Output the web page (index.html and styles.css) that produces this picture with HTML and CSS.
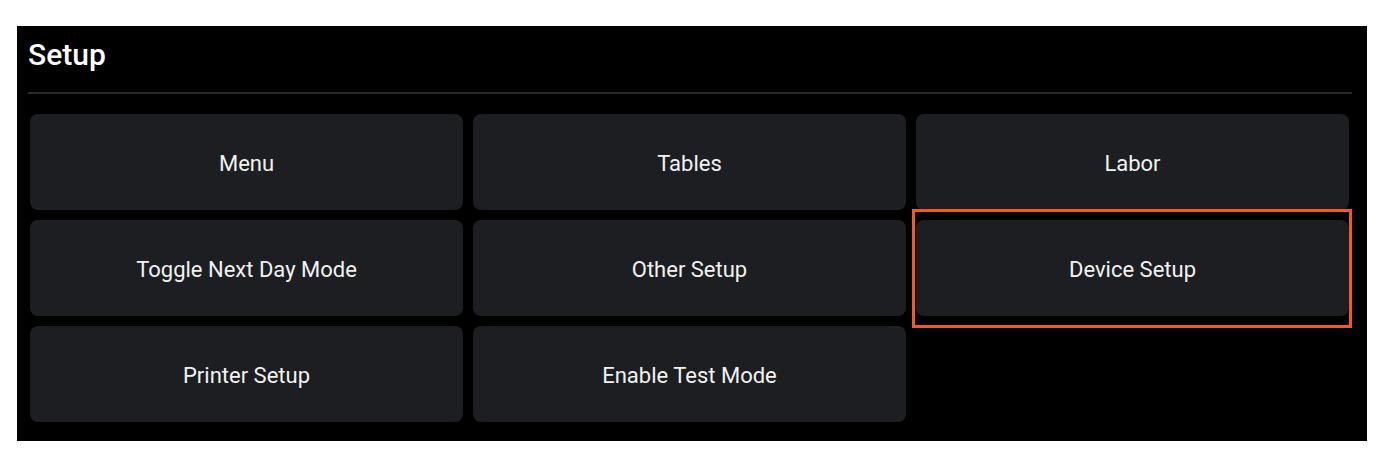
FILE: index.html
```html
<!DOCTYPE html>
<html lang="en">
<head>
<meta charset="utf-8">
<title>Setup</title>
<link rel="stylesheet" href="styles.css">
</head>
<body>
<div class="panel">
  <div class="header">
    <h1 class="title">Setup</h1>
  </div>
  <div class="grid">
    <button class="tile">Menu</button>
    <button class="tile">Tables</button>
    <button class="tile">Labor</button>
    <button class="tile">Toggle Next Day Mode</button>
    <button class="tile">Other Setup</button>
    <button class="tile tile-focused">Device Setup</button>
    <button class="tile">Printer Setup</button>
    <button class="tile">Enable Test Mode</button>
  </div>
</div>
</body>
</html>
```
FILE: styles.css
```css
html, body {
  margin: 0;
  padding: 0;
  background: #ffffff;
}

body {
  padding: 26px 0 0 17px;
  font-family: Roboto, "Liberation Sans", Arial, sans-serif;
}

.panel {
  width: 1350px;
  height: 415px;
  box-sizing: border-box;
  background: #000000;
  padding: 12px 15px 0 11px;
}

.header {
  border-bottom: 2px solid #2a2a2c;
  padding-bottom: 20px;
}

.title {
  margin: 0;
  padding-left: 0;
  color: #ffffff;
  font-size: 30px;
  line-height: 34px;
  font-weight: 500;
}

.grid {
  display: grid;
  grid-template-columns: repeat(3, 433px);
  grid-auto-rows: 96px;
  gap: 10px;
  margin-top: 20px;
  padding-left: 2px;
}

.tile {
  position: relative;
  margin: 0;
  border: none;
  border-radius: 8px;
  background: #1c1e22;
  color: #f2f2f2;
  font-family: Roboto, "Liberation Sans", Arial, sans-serif;
  font-size: 22px;
  font-weight: 400;
  padding: 2px 0 0 0;
  cursor: pointer;
}

.tile-focused::after {
  content: "";
  position: absolute;
  top: -11px;
  bottom: -12px;
  left: -4px;
  right: -3px;
  border: 3px solid #f05a28;
  pointer-events: none;
}
```
